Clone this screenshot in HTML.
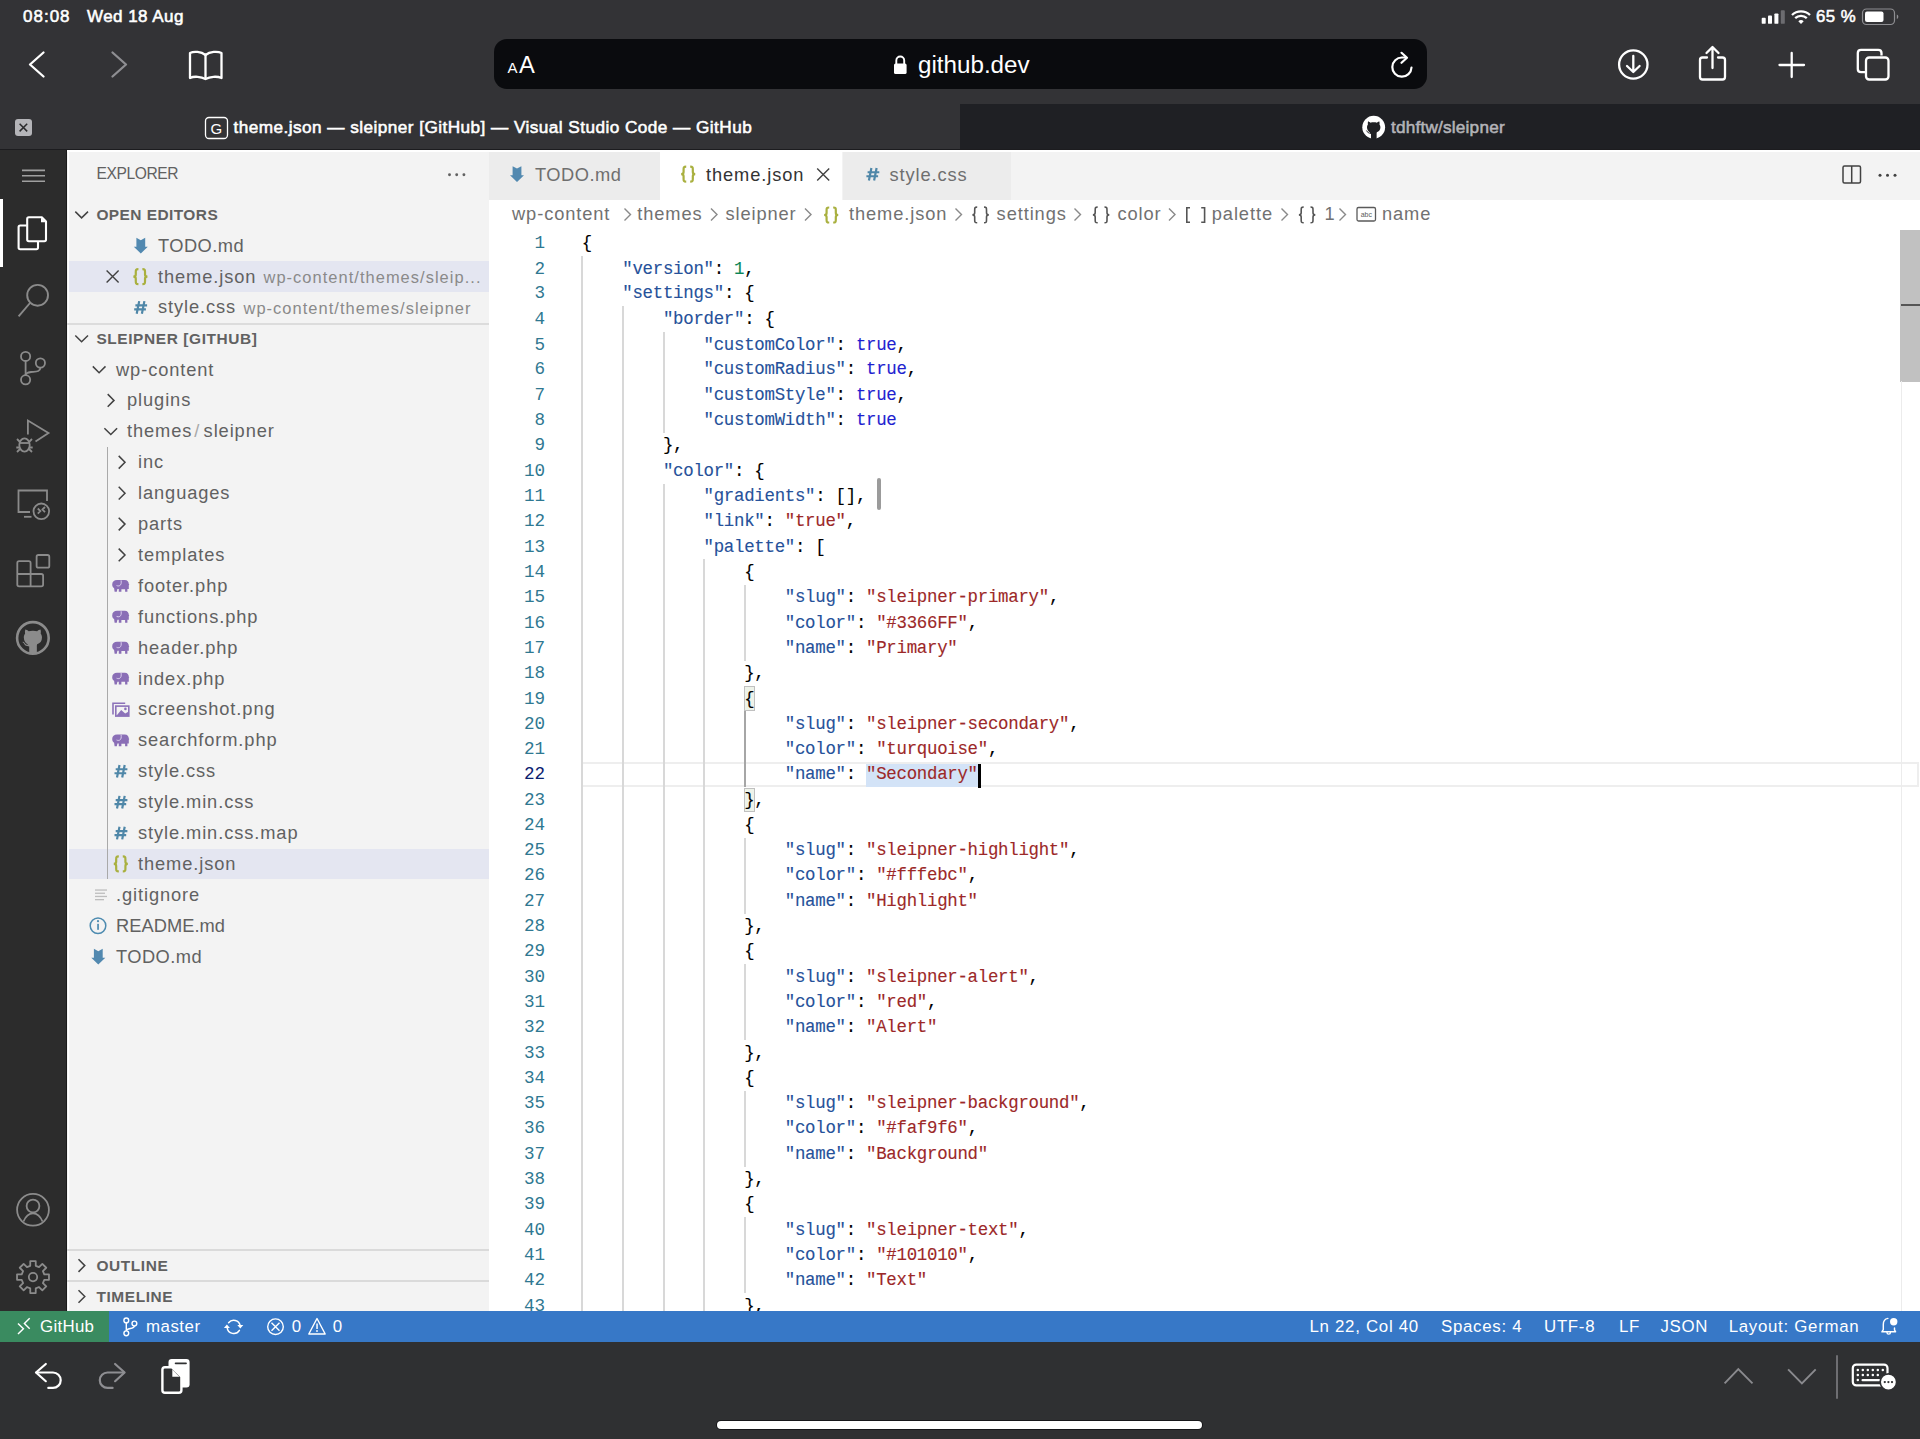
<!DOCTYPE html>
<html><head><meta charset="utf-8">
<style>
html,body{margin:0;padding:0}
body{width:1920px;height:1439px;overflow:hidden;position:relative;background:#333336;font-family:"Liberation Sans",sans-serif}
.a{position:absolute}
.t{position:absolute;white-space:pre;line-height:1}
svg.ov{position:absolute;left:0;top:0;overflow:visible}
.ios{color:#fff;font-size:17px;font-weight:normal;-webkit-text-stroke:0.55px currentColor;letter-spacing:0.45px}
.side{color:#616161;font-size:18.27px;letter-spacing:0.9px}
.desc{color:#8a8a8a;font-size:16.45px;letter-spacing:1.04px}
.hdr{color:#616161;font-size:15.45px;font-weight:bold;letter-spacing:0.6px}
.tab{font-size:18.27px;letter-spacing:0.9px}
.bc{color:#717171;font-size:18.27px;letter-spacing:0.9px}
.st{color:#fff;font-size:16.86px;letter-spacing:0.7px}
.code{font-family:"Liberation Mono",monospace;font-size:17.4px;letter-spacing:-0.28px;line-height:23.645px;white-space:pre;position:absolute;left:581.7px;top:230.5px;color:#000;-webkit-text-stroke:0.12px currentColor;transform:scaleY(1.07);transform-origin:0 0}
.ln{font-family:"Liberation Mono",monospace;font-size:17.6px;line-height:23.645px;transform:scaleY(1.07);transform-origin:0 0;white-space:pre;position:absolute;text-align:right;color:#2f7891}
.k{color:#26519a}.s{color:#9c2828}.n{color:#098658}.b{color:#1f1fd0}

</style></head><body>
<div class="a" style="left:0.00px;top:0.00px;width:1920.00px;height:104.00px;background:#333336;"></div>
<div class="t ios" style="left:23.00px;top:8.00px;letter-spacing:1px">08:08</div>
<div class="t ios" style="left:87.00px;top:8.00px;">Wed 18 Aug</div>
<div class="t ios" style="left:1816.00px;top:9.00px;font-weight:normal;font-size:16.8px;letter-spacing:0.5px">65 %</div>
<div class="a" style="left:493.50px;top:39.30px;width:933.00px;height:50.20px;background:#0a0b0e;border-radius:13px"></div>
<div class="t " style="left:507.50px;top:54.20px;color:#fff;font-size:23.7px"><span style="font-size:15px;letter-spacing:1.5px">A</span>A</div>
<div class="t " style="left:918.00px;top:52.70px;color:#fff;font-size:24.2px">github.dev</div>
<div class="a" style="left:960.00px;top:104.00px;width:960.00px;height:45.00px;background:#1f2024;"></div>
<div class="a" style="left:0.00px;top:148.60px;width:1920.00px;height:1.60px;background:#1c1c1f;"></div>
<div class="t ios" style="left:233.50px;top:119.30px;font-size:17.2px">theme.json — sleipner [GitHub] — Visual Studio Code — GitHub</div>
<div class="t ios" style="left:1391.00px;top:119.30px;color:#b4b4b8;font-size:17.2px;letter-spacing:0.2px">tdhftw/sleipner</div>
<div class="a" style="left:0.00px;top:150.00px;width:67.40px;height:1161.20px;background:#2c2c2c;"></div>
<div class="a" style="left:67.40px;top:150.00px;width:421.60px;height:1161.20px;background:#f3f3f3;"></div>
<div class="a" style="left:66.00px;top:150.00px;width:1.40px;height:1161.20px;background:#1a1a1a;"></div>
<div class="a" style="left:67.70px;top:150.00px;width:1.30px;height:1161.20px;background:#ffffff;"></div>
<div class="a" style="left:67.40px;top:150.00px;width:421.60px;height:1.70px;background:#ffffff;"></div>
<div class="a" style="left:489.00px;top:150.00px;width:1431.00px;height:1161.20px;background:#ffffff;"></div>
<div class="a" style="left:0.00px;top:1311.20px;width:1920.00px;height:30.90px;background:#3778c7;"></div>
<div class="a" style="left:0.00px;top:1311.20px;width:109.40px;height:30.90px;background:#3a8b60;"></div>
<div class="a" style="left:0.00px;top:1342.10px;width:1920.00px;height:97.00px;background:#2f3032;"></div>
<div class="t hdr" style="left:96.60px;top:166.30px;font-weight:normal;letter-spacing:-0.42px;font-size:15.6px">EXPLORER</div>
<div class="t hdr" style="left:96.40px;top:206.70px;letter-spacing:0.45px">OPEN EDITORS</div>
<div class="t side" style="left:158px;top:236.6px;letter-spacing:0.45px">TODO.md</div>
<div class="a" style="left:69.00px;top:261.10px;width:420.00px;height:30.90px;background:#e4e6f1;"></div>
<div class="t side" style="left:158px;top:267.5px;">theme.json</div>
<div class="t desc" style="left:263.5px;top:268.8px">wp-content/themes/sleip...</div>
<div class="t side" style="left:158px;top:298.4px;">style.css</div>
<div class="t desc" style="left:243.5px;top:299.7px">wp-content/themes/sleipner</div>
<div class="a" style="left:67.40px;top:322.80px;width:421.60px;height:2.00px;background:#dcdcdc;"></div>
<div class="t hdr" style="left:96.40px;top:331.20px;">SLEIPNER [GITHUB]</div>
<div class="t side" style="left:116.0px;top:360.5px;">wp-content</div>
<div class="t side" style="left:127.0px;top:391.4px;">plugins</div>
<div class="t side" style="left:127.0px;top:422.3px;">themes</div>
<div class="t side" style="left:194.2px;top:422.3px;color:#a8a8a8;letter-spacing:0">/</div>
<div class="t side" style="left:203.6px;top:422.3px">sleipner</div>
<div class="t side" style="left:138.0px;top:453.2px;">inc</div>
<div class="t side" style="left:138.0px;top:484.1px;">languages</div>
<div class="t side" style="left:138.0px;top:515.0px;">parts</div>
<div class="t side" style="left:138.0px;top:545.9px;">templates</div>
<div class="t side" style="left:138.0px;top:576.8px;">footer.php</div>
<div class="t side" style="left:138.0px;top:607.7px;">functions.php</div>
<div class="t side" style="left:138.0px;top:638.6px;">header.php</div>
<div class="t side" style="left:138.0px;top:669.5px;">index.php</div>
<div class="t side" style="left:138.0px;top:700.4px;">screenshot.png</div>
<div class="t side" style="left:138.0px;top:731.3px;">searchform.php</div>
<div class="t side" style="left:138.0px;top:762.2px;">style.css</div>
<div class="t side" style="left:138.0px;top:793.1px;">style.min.css</div>
<div class="t side" style="left:138.0px;top:824.0px;">style.min.css.map</div>
<div class="a" style="left:69.00px;top:848.50px;width:420.00px;height:30.90px;background:#e4e6f1;"></div>
<div class="t side" style="left:138.0px;top:854.9px;">theme.json</div>
<div class="t side" style="left:116.0px;top:885.8px;">.gitignore</div>
<div class="t side" style="left:116.0px;top:916.7px;letter-spacing:0.05px">README.md</div>
<div class="t side" style="left:116.0px;top:947.6px;letter-spacing:0.45px">TODO.md</div>
<div class="a" style="left:106.60px;top:446.80px;width:1.30px;height:432.60px;background:#a9a9a9;"></div>
<div class="a" style="left:67.40px;top:1249.20px;width:421.60px;height:1.50px;background:#dadada;"></div>
<div class="a" style="left:67.40px;top:1280.10px;width:421.60px;height:1.50px;background:#dadada;"></div>
<div class="t hdr" style="left:96.40px;top:1257.70px;">OUTLINE</div>
<div class="t hdr" style="left:96.40px;top:1288.50px;">TIMELINE</div>
<div class="a" style="left:489.00px;top:150.00px;width:1431.00px;height:49.60px;background:#f3f3f3;"></div>
<div class="a" style="left:489.00px;top:150.00px;width:1431.00px;height:2.00px;background:#ffffff;"></div>
<div class="a" style="left:489.00px;top:152.00px;width:171.20px;height:47.60px;background:#ececec;"></div>
<div class="a" style="left:660.20px;top:152.00px;width:182.30px;height:47.60px;background:#ffffff;"></div>
<div class="a" style="left:842.50px;top:152.00px;width:168.50px;height:47.60px;background:#ececec;"></div>
<div class="t tab" style="left:535.00px;top:165.50px;color:#6f6f6f;letter-spacing:0.5px">TODO.md</div>
<div class="t tab" style="left:706.00px;top:165.50px;color:#333">theme.json</div>
<div class="t tab" style="left:889.40px;top:165.50px;color:#6f6f6f">style.css</div>
<div class="t bc" style="left:512.00px;top:205.00px;">wp-content</div>
<div class="t bc" style="left:637.20px;top:205.00px;">themes</div>
<div class="t bc" style="left:725.40px;top:205.00px;">sleipner</div>
<div class="t bc" style="left:849.00px;top:205.00px;">theme.json</div>
<div class="t bc" style="left:996.60px;top:205.00px;">settings</div>
<div class="t bc" style="left:1117.40px;top:205.00px;">color</div>
<div class="t bc" style="left:1211.80px;top:205.00px;">palette</div>
<div class="t bc" style="left:1324.40px;top:205.00px;">1</div>
<div class="t bc" style="left:1382.00px;top:205.00px;">name</div>
<div class="a" style="left:582.50px;top:762.30px;width:1336.50px;height:24.30px;background:transparent;border:2px solid #eeeeee;border-left:0;box-sizing:border-box"></div>
<div class="a" style="left:866.38px;top:763.60px;width:111.76px;height:23.70px;background:#d3e3f7;"></div>
<div class="a" style="left:744.46px;top:686.40px;width:10.56px;height:24.30px;background:#eef3ea;border:1.4px solid #c0c0c0;box-sizing:border-box"></div>
<div class="a" style="left:744.46px;top:787.60px;width:10.56px;height:24.30px;background:#eef3ea;border:1.4px solid #c0c0c0;box-sizing:border-box"></div>
<div class="a" style="left:581.40px;top:255.80px;width:2.00px;height:1062.60px;background:#d8d8d8;"></div>
<div class="a" style="left:622.04px;top:306.40px;width:2.00px;height:1012.00px;background:#d8d8d8;"></div>
<div class="a" style="left:662.68px;top:331.70px;width:2.00px;height:101.20px;background:#d8d8d8;"></div>
<div class="a" style="left:662.68px;top:483.50px;width:2.00px;height:834.90px;background:#d8d8d8;"></div>
<div class="a" style="left:703.32px;top:559.40px;width:2.00px;height:759.00px;background:#d8d8d8;"></div>
<div class="a" style="left:743.96px;top:584.70px;width:2.00px;height:75.90px;background:#d8d8d8;"></div>
<div class="a" style="left:743.96px;top:837.70px;width:2.00px;height:75.90px;background:#d8d8d8;"></div>
<div class="a" style="left:743.96px;top:964.20px;width:2.00px;height:75.90px;background:#d8d8d8;"></div>
<div class="a" style="left:743.96px;top:1090.70px;width:2.00px;height:75.90px;background:#d8d8d8;"></div>
<div class="a" style="left:743.96px;top:1217.20px;width:2.00px;height:75.90px;background:#d8d8d8;"></div>
<div class="a" style="left:743.96px;top:711.20px;width:2.00px;height:75.90px;background:#a6a6a6;"></div>
<div class="ln" style="left:489px;width:56px;top:231.4px">1
2
3
4
5
6
7
8
9
10
11
12
13
14
15
16
17
18
19
20
21
<span style="color:#0b216f">22</span>
23
24
25
26
27
28
29
30
31
32
33
34
35
36
37
38
39
40
41
42
43</div>
<div class="code" style="top:231.4px">{
    <span class="k">&quot;version&quot;</span>: <span class="n">1</span>,
    <span class="k">&quot;settings&quot;</span>: {
        <span class="k">&quot;border&quot;</span>: {
            <span class="k">&quot;customColor&quot;</span>: <span class="b">true</span>,
            <span class="k">&quot;customRadius&quot;</span>: <span class="b">true</span>,
            <span class="k">&quot;customStyle&quot;</span>: <span class="b">true</span>,
            <span class="k">&quot;customWidth&quot;</span>: <span class="b">true</span>
        },
        <span class="k">&quot;color&quot;</span>: {
            <span class="k">&quot;gradients&quot;</span>: [],
            <span class="k">&quot;link&quot;</span>: <span class="s">&quot;true&quot;</span>,
            <span class="k">&quot;palette&quot;</span>: [
                {
                    <span class="k">&quot;slug&quot;</span>: <span class="s">&quot;sleipner-primary&quot;</span>,
                    <span class="k">&quot;color&quot;</span>: <span class="s">&quot;#3366FF&quot;</span>,
                    <span class="k">&quot;name&quot;</span>: <span class="s">&quot;Primary&quot;</span>
                },
                {
                    <span class="k">&quot;slug&quot;</span>: <span class="s">&quot;sleipner-secondary&quot;</span>,
                    <span class="k">&quot;color&quot;</span>: <span class="s">&quot;turquoise&quot;</span>,
                    <span class="k">&quot;name&quot;</span>: <span class="s">&quot;Secondary&quot;</span>
                },
                {
                    <span class="k">&quot;slug&quot;</span>: <span class="s">&quot;sleipner-highlight&quot;</span>,
                    <span class="k">&quot;color&quot;</span>: <span class="s">&quot;#fffebc&quot;</span>,
                    <span class="k">&quot;name&quot;</span>: <span class="s">&quot;Highlight&quot;</span>
                },
                {
                    <span class="k">&quot;slug&quot;</span>: <span class="s">&quot;sleipner-alert&quot;</span>,
                    <span class="k">&quot;color&quot;</span>: <span class="s">&quot;red&quot;</span>,
                    <span class="k">&quot;name&quot;</span>: <span class="s">&quot;Alert&quot;</span>
                },
                {
                    <span class="k">&quot;slug&quot;</span>: <span class="s">&quot;sleipner-background&quot;</span>,
                    <span class="k">&quot;color&quot;</span>: <span class="s">&quot;#faf9f6&quot;</span>,
                    <span class="k">&quot;name&quot;</span>: <span class="s">&quot;Background&quot;</span>
                },
                {
                    <span class="k">&quot;slug&quot;</span>: <span class="s">&quot;sleipner-text&quot;</span>,
                    <span class="k">&quot;color&quot;</span>: <span class="s">&quot;#101010&quot;</span>,
                    <span class="k">&quot;name&quot;</span>: <span class="s">&quot;Text&quot;</span>
                },</div>
<div class="a" style="left:978.34px;top:763.60px;width:2.80px;height:24.50px;background:#000;"></div>
<div class="a" style="left:876.50px;top:478.00px;width:4.50px;height:32.00px;background:#9b9b9b;border-radius:2.2px"></div>
<div class="a" style="left:1900.00px;top:230.40px;width:20.00px;height:151.60px;background:#c1c1c1;"></div>
<div class="a" style="left:1900.50px;top:381.00px;width:1.00px;height:930.00px;background:#ececec;"></div>
<div class="a" style="left:1901.00px;top:304.00px;width:19.00px;height:2.20px;background:#555555;"></div>
<div class="a" style="left:0.00px;top:1311.20px;width:1920.00px;height:30.90px;background:#3778c7;"></div>
<div class="a" style="left:0.00px;top:1311.20px;width:109.40px;height:30.90px;background:#3a8b60;"></div>
<div class="a" style="left:0.00px;top:1342.10px;width:1920.00px;height:97.00px;background:#2f3032;"></div>
<div class="t st" style="left:40.00px;top:1318.50px;letter-spacing:0.3px">GitHub</div>
<div class="t st" style="left:146.00px;top:1318.50px;letter-spacing:0.5px">master</div>
<div class="t st" style="left:291.70px;top:1318.50px;">0</div>
<div class="t st" style="left:332.80px;top:1318.50px;">0</div>
<div class="t st" style="left:1309.50px;top:1318.50px;">Ln 22, Col 40</div>
<div class="t st" style="left:1441.00px;top:1318.50px;">Spaces: 4</div>
<div class="t st" style="left:1544.00px;top:1318.50px;">UTF-8</div>
<div class="t st" style="left:1619.00px;top:1318.50px;">LF</div>
<div class="t st" style="left:1660.40px;top:1318.50px;">JSON</div>
<div class="t st" style="left:1728.70px;top:1318.50px;">Layout: German</div>
<div class="a" style="left:1835.80px;top:1355.20px;width:2.40px;height:43.80px;background:#6e6e72;border-radius:1.2px"></div>
<div class="a" style="left:717.00px;top:1420.60px;width:485.00px;height:8.20px;background:#ffffff;border-radius:4.1px;box-shadow:0 0 0 1px #17171a"></div>
<div class="a" style="left:0.00px;top:198.60px;width:3.00px;height:68.20px;background:#ffffff;"></div>
<div class="t" style="left:210.5px;top:120.5px;color:#fff;font-size:15px">G</div>
<div class="a" style="left:15.00px;top:119.20px;width:16.80px;height:16.80px;background:#b4b4b8;border-radius:3px"></div>
<svg class="ov" width="1920" height="1439" viewBox="0 0 1920 1439">
<circle cx="449.5" cy="174.8" r="1.45" fill="#616161"/>
<circle cx="456.7" cy="174.8" r="1.45" fill="#616161"/>
<circle cx="463.9" cy="174.8" r="1.45" fill="#616161"/>
<path d="M75.3 211.6 L81.6 217.9 L88.0 211.6" fill="none" stroke="#424242" stroke-width="1.5"/>
<path transform="translate(133.80 237.75)" d="M2.6 0 L7 2.4 L11.4 0 V9 H14 L7 15.7 L0 9 H2.6 Z" fill="#5289b0"/>
<path d="M106.6 270.6 l12 12 M118.6 270.6 l-12 12" stroke="#424242" stroke-width="1.4"/>
<path d="M138.42 269.05 C135.78 269.05 135.78 269.95 135.78 272.05 L135.78 274.45 C135.78 275.80 135.12 276.55 133.36 276.55 C135.12 276.55 135.78 277.30 135.78 278.65 L135.78 281.05 C135.78 283.15 135.78 284.05 138.42 284.05" fill="none" stroke="#a9b03f" stroke-width="2.20"/>
<path d="M142.38 269.05 C145.02 269.05 145.02 269.95 145.02 272.05 L145.02 274.45 C145.02 275.80 145.68 276.55 147.44 276.55 C145.68 276.55 145.02 277.30 145.02 278.65 L145.02 281.05 C145.02 283.15 145.02 284.05 142.38 284.05" fill="none" stroke="#a9b03f" stroke-width="2.20"/>
<path transform="translate(133.80 301.15)" d="M5.4 0 L2.9 12.6 M10.6 0 L8.1 12.6 M1.6 4.3 H13.3 M0.4 8.3 H12.1" fill="none" stroke="#4f87a8" stroke-width="2.2"/>
<path d="M75.3 335.5 L81.6 341.8 L88.0 335.5" fill="none" stroke="#424242" stroke-width="1.5"/>
<path d="M92.8 366.4 L99.1 372.7 L105.5 366.4" fill="none" stroke="#424242" stroke-width="1.5"/>
<path d="M107.7 394.1 L114.0 400.4 L107.7 406.8" fill="none" stroke="#424242" stroke-width="1.5"/>
<path d="M104.4 428.2 L110.8 434.5 L117.1 428.2" fill="none" stroke="#424242" stroke-width="1.5"/>
<path d="M118.7 455.9 L125.0 462.2 L118.7 468.6" fill="none" stroke="#424242" stroke-width="1.5"/>
<path d="M118.7 486.8 L125.0 493.2 L118.7 499.5" fill="none" stroke="#424242" stroke-width="1.5"/>
<path d="M118.7 517.7 L125.0 524.1 L118.7 530.4" fill="none" stroke="#424242" stroke-width="1.5"/>
<path d="M118.7 548.6 L125.0 555.0 L118.7 561.3" fill="none" stroke="#424242" stroke-width="1.5"/>
<g transform="translate(112.20 579.95)"><path fill="#8a6eb6" d="M0 4.6 C0 1.6 2 0 4.8 0 L12.6 0 C15.2 0 16.6 1.8 16.6 4 L17.1 4.6 L16.6 5.2 V9 L15.2 9 V11.9 H12.9 V9.2 H9.2 V11.9 H6.6 V9 H5.2 L4.6 11.9 H2.4 L1.9 8.2 C0.7 7.6 0 6.2 0 4.6 Z"/><path d="M8.9 0.4 C9.2 3 9 4.8 7.6 5.6 C6.6 6.1 5.5 6.1 4.4 5.6" fill="none" stroke="#dcd0ee" stroke-width="1"/></g>
<g transform="translate(112.20 610.85)"><path fill="#8a6eb6" d="M0 4.6 C0 1.6 2 0 4.8 0 L12.6 0 C15.2 0 16.6 1.8 16.6 4 L17.1 4.6 L16.6 5.2 V9 L15.2 9 V11.9 H12.9 V9.2 H9.2 V11.9 H6.6 V9 H5.2 L4.6 11.9 H2.4 L1.9 8.2 C0.7 7.6 0 6.2 0 4.6 Z"/><path d="M8.9 0.4 C9.2 3 9 4.8 7.6 5.6 C6.6 6.1 5.5 6.1 4.4 5.6" fill="none" stroke="#dcd0ee" stroke-width="1"/></g>
<g transform="translate(112.20 641.75)"><path fill="#8a6eb6" d="M0 4.6 C0 1.6 2 0 4.8 0 L12.6 0 C15.2 0 16.6 1.8 16.6 4 L17.1 4.6 L16.6 5.2 V9 L15.2 9 V11.9 H12.9 V9.2 H9.2 V11.9 H6.6 V9 H5.2 L4.6 11.9 H2.4 L1.9 8.2 C0.7 7.6 0 6.2 0 4.6 Z"/><path d="M8.9 0.4 C9.2 3 9 4.8 7.6 5.6 C6.6 6.1 5.5 6.1 4.4 5.6" fill="none" stroke="#dcd0ee" stroke-width="1"/></g>
<g transform="translate(112.20 672.65)"><path fill="#8a6eb6" d="M0 4.6 C0 1.6 2 0 4.8 0 L12.6 0 C15.2 0 16.6 1.8 16.6 4 L17.1 4.6 L16.6 5.2 V9 L15.2 9 V11.9 H12.9 V9.2 H9.2 V11.9 H6.6 V9 H5.2 L4.6 11.9 H2.4 L1.9 8.2 C0.7 7.6 0 6.2 0 4.6 Z"/><path d="M8.9 0.4 C9.2 3 9 4.8 7.6 5.6 C6.6 6.1 5.5 6.1 4.4 5.6" fill="none" stroke="#dcd0ee" stroke-width="1"/></g>
<g transform="translate(112.2 702.5)"><path d="M0.8 12 V0.8 H13" fill="none" stroke="#8c72b9" stroke-width="1.6"/><rect x="3.6" y="3.6" width="13" height="10" fill="none" stroke="#8c72b9" stroke-width="1.6"/><path d="M4 13.5 L9 7.5 L13 11 L16.5 9 V13.5 Z" fill="#8c72b9"/><circle cx="13.2" cy="6.4" r="1.3" fill="#8c72b9"/></g>
<g transform="translate(112.20 734.45)"><path fill="#8a6eb6" d="M0 4.6 C0 1.6 2 0 4.8 0 L12.6 0 C15.2 0 16.6 1.8 16.6 4 L17.1 4.6 L16.6 5.2 V9 L15.2 9 V11.9 H12.9 V9.2 H9.2 V11.9 H6.6 V9 H5.2 L4.6 11.9 H2.4 L1.9 8.2 C0.7 7.6 0 6.2 0 4.6 Z"/><path d="M8.9 0.4 C9.2 3 9 4.8 7.6 5.6 C6.6 6.1 5.5 6.1 4.4 5.6" fill="none" stroke="#dcd0ee" stroke-width="1"/></g>
<path transform="translate(114.10 764.95)" d="M5.4 0 L2.9 12.6 M10.6 0 L8.1 12.6 M1.6 4.3 H13.3 M0.4 8.3 H12.1" fill="none" stroke="#4f87a8" stroke-width="2.2"/>
<path transform="translate(114.10 795.85)" d="M5.4 0 L2.9 12.6 M10.6 0 L8.1 12.6 M1.6 4.3 H13.3 M0.4 8.3 H12.1" fill="none" stroke="#4f87a8" stroke-width="2.2"/>
<path transform="translate(114.10 826.75)" d="M5.4 0 L2.9 12.6 M10.6 0 L8.1 12.6 M1.6 4.3 H13.3 M0.4 8.3 H12.1" fill="none" stroke="#4f87a8" stroke-width="2.2"/>
<path d="M118.82 856.45 C116.18 856.45 116.18 857.35 116.18 859.45 L116.18 861.85 C116.18 863.20 115.52 863.95 113.76 863.95 C115.52 863.95 116.18 864.70 116.18 866.05 L116.18 868.45 C116.18 870.55 116.18 871.45 118.82 871.45" fill="none" stroke="#a9b03f" stroke-width="2.20"/>
<path d="M122.78 856.45 C125.42 856.45 125.42 857.35 125.42 859.45 L125.42 861.85 C125.42 863.20 126.08 863.95 127.84 863.95 C126.08 863.95 125.42 864.70 125.42 866.05 L125.42 868.45 C125.42 870.55 125.42 871.45 122.78 871.45" fill="none" stroke="#a9b03f" stroke-width="2.20"/>
<rect x="95" y="889.4" width="12" height="1.3" fill="#bdbdbd"/>
<rect x="95" y="892.6" width="10" height="1.3" fill="#bdbdbd"/>
<rect x="95" y="895.8" width="12" height="1.3" fill="#bdbdbd"/>
<rect x="95" y="899.0" width="9" height="1.3" fill="#bdbdbd"/>
<circle cx="98" cy="925.8" r="7.8" fill="none" stroke="#4d8bb0" stroke-width="1.5"/>
<rect x="97.2" y="923.8" width="1.7" height="6" fill="#4d8bb0"/><circle cx="98" cy="921.2" r="1.1" fill="#4d8bb0"/>
<path transform="translate(91.30 948.75)" d="M2.6 0 L7 2.4 L11.4 0 V9 H14 L7 15.7 L0 9 H2.6 Z" fill="#5289b0"/>
<path d="M78.5 1259.2 L84.8 1265.6 L78.5 1271.9" fill="none" stroke="#424242" stroke-width="1.5"/>
<path d="M78.5 1290.2 L84.8 1296.5 L78.5 1302.8" fill="none" stroke="#424242" stroke-width="1.5"/>
<path transform="translate(510.00 166.20)" d="M2.6 0 L7 2.4 L11.4 0 V9 H14 L7 15.7 L0 9 H2.6 Z" fill="#5289b0"/>
<path d="M686.22 166.70 C683.58 166.70 683.58 167.60 683.58 169.70 L683.58 172.10 C683.58 173.45 682.92 174.20 681.16 174.20 C682.92 174.20 683.58 174.95 683.58 176.30 L683.58 178.70 C683.58 180.80 683.58 181.70 686.22 181.70" fill="none" stroke="#a9b03f" stroke-width="2.20"/>
<path d="M690.18 166.70 C692.82 166.70 692.82 167.60 692.82 169.70 L692.82 172.10 C692.82 173.45 693.48 174.20 695.24 174.20 C693.48 174.20 692.82 174.95 692.82 176.30 L692.82 178.70 C692.82 180.80 692.82 181.70 690.18 181.70" fill="none" stroke="#a9b03f" stroke-width="2.20"/>
<path d="M817.2 168.6 l12 12 M829.2 168.6 l-12 12" stroke="#424242" stroke-width="1.4"/>
<path transform="translate(866.00 167.95)" d="M5.4 0 L2.9 12.6 M10.6 0 L8.1 12.6 M1.6 4.3 H13.3 M0.4 8.3 H12.1" fill="none" stroke="#4f87a8" stroke-width="2.2"/>
<rect x="1843" y="166" width="17.5" height="17" rx="1.5" fill="none" stroke="#424242" stroke-width="1.5"/><path d="M1851.7 166 v17" stroke="#424242" stroke-width="1.5"/>
<circle cx="1880.0" cy="175.2" r="1.5" fill="#424242"/>
<circle cx="1887.5" cy="175.2" r="1.5" fill="#424242"/>
<circle cx="1895.0" cy="175.2" r="1.5" fill="#424242"/>
<path d="M624.5 208.4 L630.5 214.5 L624.5 220.6" fill="none" stroke="#8a8a8a" stroke-width="1.4"/>
<path d="M711.0 208.4 L717.0 214.5 L711.0 220.6" fill="none" stroke="#8a8a8a" stroke-width="1.4"/>
<path d="M805.0 208.4 L811.0 214.5 L805.0 220.6" fill="none" stroke="#8a8a8a" stroke-width="1.4"/>
<path d="M955.5 208.4 L961.5 214.5 L955.5 220.6" fill="none" stroke="#8a8a8a" stroke-width="1.4"/>
<path d="M1074.5 208.4 L1080.5 214.5 L1074.5 220.6" fill="none" stroke="#8a8a8a" stroke-width="1.4"/>
<path d="M1169.0 208.4 L1175.0 214.5 L1169.0 220.6" fill="none" stroke="#8a8a8a" stroke-width="1.4"/>
<path d="M1281.5 208.4 L1287.5 214.5 L1281.5 220.6" fill="none" stroke="#8a8a8a" stroke-width="1.4"/>
<path d="M1339.5 208.4 L1345.5 214.5 L1339.5 220.6" fill="none" stroke="#8a8a8a" stroke-width="1.4"/>
<path d="M829.22 207.50 C826.58 207.50 826.58 208.40 826.58 210.50 L826.58 212.90 C826.58 214.25 825.92 215.00 824.16 215.00 C825.92 215.00 826.58 215.75 826.58 217.10 L826.58 219.50 C826.58 221.60 826.58 222.50 829.22 222.50" fill="none" stroke="#a9b03f" stroke-width="2.20"/>
<path d="M833.18 207.50 C835.82 207.50 835.82 208.40 835.82 210.50 L835.82 212.90 C835.82 214.25 836.48 215.00 838.24 215.00 C836.48 215.00 835.82 215.75 835.82 217.10 L835.82 219.50 C835.82 221.60 835.82 222.50 833.18 222.50" fill="none" stroke="#a9b03f" stroke-width="2.20"/>
<path d="M977.21 207.00 C974.69 207.00 974.69 207.95 974.69 210.16 L974.69 212.69 C974.69 214.11 974.06 214.90 972.38 214.90 C974.06 214.90 974.69 215.69 974.69 217.11 L974.69 219.64 C974.69 221.85 974.69 222.80 977.21 222.80" fill="none" stroke="#555555" stroke-width="1.60"/>
<path d="M983.99 207.00 C986.51 207.00 986.51 207.95 986.51 210.16 L986.51 212.69 C986.51 214.11 987.14 214.90 988.82 214.90 C987.14 214.90 986.51 215.69 986.51 217.11 L986.51 219.64 C986.51 221.85 986.51 222.80 983.99 222.80" fill="none" stroke="#555555" stroke-width="1.60"/>
<path d="M1097.71 207.00 C1095.19 207.00 1095.19 207.95 1095.19 210.16 L1095.19 212.69 C1095.19 214.11 1094.56 214.90 1092.88 214.90 C1094.56 214.90 1095.19 215.69 1095.19 217.11 L1095.19 219.64 C1095.19 221.85 1095.19 222.80 1097.71 222.80" fill="none" stroke="#555555" stroke-width="1.60"/>
<path d="M1104.49 207.00 C1107.01 207.00 1107.01 207.95 1107.01 210.16 L1107.01 212.69 C1107.01 214.11 1107.64 214.90 1109.32 214.90 C1107.64 214.90 1107.01 215.69 1107.01 217.11 L1107.01 219.64 C1107.01 221.85 1107.01 222.80 1104.49 222.80" fill="none" stroke="#555555" stroke-width="1.60"/>
<path d="M1303.71 207.00 C1301.19 207.00 1301.19 207.95 1301.19 210.16 L1301.19 212.69 C1301.19 214.11 1300.56 214.90 1298.88 214.90 C1300.56 214.90 1301.19 215.69 1301.19 217.11 L1301.19 219.64 C1301.19 221.85 1301.19 222.80 1303.71 222.80" fill="none" stroke="#555555" stroke-width="1.60"/>
<path d="M1310.49 207.00 C1313.01 207.00 1313.01 207.95 1313.01 210.16 L1313.01 212.69 C1313.01 214.11 1313.64 214.90 1315.32 214.90 C1313.64 214.90 1313.01 215.69 1313.01 217.11 L1313.01 219.64 C1313.01 221.85 1313.01 222.80 1310.49 222.80" fill="none" stroke="#555555" stroke-width="1.60"/>
<path d="M1190 207.7 H1186.8 V222.3 H1190 M1201.2 207.7 H1204.6 V222.3 H1201.2" fill="none" stroke="#555" stroke-width="1.6"/>
<rect x="1357" y="207.5" width="18.5" height="13.5" rx="1.5" fill="none" stroke="#5a5a5a" stroke-width="1.3"/>
<text x="1366.3" y="217" font-size="7" font-family="Liberation Sans" text-anchor="middle" fill="#5a5a5a">abc</text>
<path d="M18 1323.4 L23.4 1328.7 L18 1334 M29.7 1318.2 L24.4 1323.5 L29.7 1328.8" fill="none" stroke="#fff" stroke-width="1.45"/>
<g fill="none" stroke="#fff" stroke-width="1.4"><circle cx="126.3" cy="1320.4" r="2.4"/><circle cx="126.3" cy="1333.3" r="2.4"/><circle cx="134.4" cy="1323.5" r="2.4"/><path d="M126.3 1322.8 V1330.9 M134.4 1325.9 C134.4 1329.5 126.3 1327.5 126.3 1330.9"/></g>
<g fill="none" stroke="#fff" stroke-width="1.5" stroke-linecap="round"><path d="M228.6 1322.7 A6.6 6.6 0 0 1 240.2 1325.6"/><path d="M239.4 1330.4 A6.6 6.6 0 0 1 227.2 1327.6"/></g><path d="M237.3 1325.1 L243.3 1325.1 L240.3 1328.6 Z M223.9 1328 L229.9 1328 L226.9 1324.6 Z" fill="#fff"/>
<g fill="none" stroke="#fff" stroke-width="1.4"><circle cx="275.5" cy="1326.7" r="7.8"/><path d="M271.5 1322.7 l8 8 M279.5 1322.7 l-8 8"/></g>
<g fill="none" stroke="#fff" stroke-width="1.4"><path d="M317 1318.5 L325.2 1334 H308.8 Z" stroke-linejoin="round"/></g><rect x="316.3" y="1323.5" width="1.5" height="5.5" fill="#fff"/><circle cx="317" cy="1331" r="0.9" fill="#fff"/>
<g fill="none" stroke="#fff" stroke-width="1.45" stroke-linecap="round" stroke-linejoin="round"><path d="M1887.9 1318.4 C1884.6 1318.9 1883.3 1321.5 1883.3 1324.6 V1329.6 L1881.9 1331.8 H1895.6 L1894.5 1329.8 V1328"/><path d="M1887 1332.4 a1.7 1.7 0 0 0 3.4 0"/></g><circle cx="1893.7" cy="1321.8" r="3.7" fill="#fff"/>
<g fill="none" stroke="#fff" stroke-width="2.2" stroke-linecap="round" stroke-linejoin="round"><path d="M45.8 1364 L36 1372.5 L45.8 1381.2"/><path d="M36.5 1372.5 H53 A7.7 7.7 0 0 1 53 1387.9 H48.3"/></g>
<g fill="none" stroke="#8e8e92" stroke-width="2.2" stroke-linecap="round" stroke-linejoin="round"><path d="M115.1 1364 L124.6 1372.5 L115.1 1381.2"/><path d="M124 1372.5 H107.5 A7.7 7.7 0 0 0 107.5 1387.9 H112.6"/></g>
<rect x="168.5" y="1358.9" width="21.1" height="28.6" rx="3.2" fill="#fff"/><path d="M175.6 1363.3 H186" stroke="#2f3032" stroke-width="1.8" stroke-linecap="round"/><path d="M165 1367.2 H171.8 L181.4 1376.6 V1390.2 q0 2.6 -2.6 2.6 H165 q-2.6 0 -2.6 -2.6 V1369.8 q0 -2.6 2.6 -2.6 Z" fill="#2f3032" stroke="#fff" stroke-width="2.4" stroke-linejoin="round"/><path d="M172.3 1369.6 V1376.8 H179.4 Z" fill="#fff"/>
<path d="M1724.6 1383.3 L1738.3 1369 L1752.5 1383.3" fill="none" stroke="#8a8a8e" stroke-width="1.9"/>
<path d="M1788.1 1369.3 L1801.9 1383.5 L1815.7 1369.3" fill="none" stroke="#8a8a8e" stroke-width="1.9"/>
<rect x="1852.8" y="1364.6" width="34.7" height="20.8" rx="3.5" fill="none" stroke="#fff" stroke-width="2.2"/>
<g fill="#fff"><circle cx="1857.8" cy="1370" r="1.25"/><circle cx="1862.8" cy="1370" r="1.25"/><circle cx="1867.8" cy="1370" r="1.25"/><circle cx="1872.8" cy="1370" r="1.25"/><circle cx="1877.8" cy="1370" r="1.25"/><circle cx="1882.8" cy="1370" r="1.25"/><circle cx="1857.8" cy="1375" r="1.25"/><circle cx="1862.8" cy="1375" r="1.25"/><circle cx="1867.8" cy="1375" r="1.25"/><circle cx="1872.8" cy="1375" r="1.25"/><circle cx="1877.8" cy="1375" r="1.25"/><circle cx="1857.8" cy="1380" r="1.25"/><rect x="1861.5" y="1379" width="19" height="2.2" rx="1"/></g>
<circle cx="1888.4" cy="1382.1" r="8.2" fill="#fff" stroke="#2f3032" stroke-width="1.6"/><g fill="#2f3032"><circle cx="1884.8" cy="1382.1" r="1.15"/><circle cx="1888.4" cy="1382.1" r="1.15"/><circle cx="1892" cy="1382.1" r="1.15"/></g>
<g stroke="#a0a0a0" stroke-width="1.6"><path d="M22 170.4 h23 M22 175.8 h23 M22 181.2 h23"/></g>
<g fill="none" stroke="#fff" stroke-width="2.1" stroke-linejoin="round"><path d="M26.8 225.5 H20.2 q-1.6 0 -1.6 1.6 V247.6 q0 1.6 1.6 1.6 H36.4 q1.6 0 1.6 -1.6 V241.3"/><path d="M28.8 217.3 H41.8 L46 221.5 V239.6 q0 1.6 -1.6 1.6 H28.8 q-1.6 0 -1.6 -1.6 V218.9 q0 -1.6 1.6 -1.6 Z"/></g><path d="M41 217.5 L46 222.3 H41 Z" fill="#fff"/>
<g fill="none" stroke="#8b8b8b" stroke-width="1.9"><circle cx="37.6" cy="295.3" r="10.4"/><path d="M30 303 L18.6 316.3"/></g>
<g fill="none" stroke="#8b8b8b" stroke-width="1.8"><circle cx="25.6" cy="356.4" r="4.6"/><circle cx="40.4" cy="363" r="4.6"/><circle cx="25.6" cy="379.8" r="4.6"/><path d="M25.6 361 V375.2"/><path d="M40.4 367.6 C40.4 372 36 371.5 31 372 C27.5 372.5 25.6 373 25.6 375"/></g>
<g fill="none" stroke="#8b8b8b" stroke-width="1.8"><path d="M27.9 434.5 V420.5 L48.5 433 L35.5 441.5"/><ellipse cx="24.5" cy="445" rx="5.2" ry="6.6"/><path d="M19.5 443 h10"/><path d="M16.3 447.5 h3 M29.7 447.5 h3 M17 439 l3 3 M32 439 l-3 3 M17 452 l3 -3 M32 452 l-3 -3"/></g>
<g fill="none" stroke="#8b8b8b" stroke-width="1.8"><path d="M30 512 H18.5 V490.5 H47 V501"/><path d="M24 516.8 H31.5"/><circle cx="41.3" cy="511.3" r="7.8"/><path d="M37.8 508.5 l2.6 2.6 l-2.6 2.6 M45 507 l-2.6 2.6 l2.6 2.6"/></g>
<g fill="none" stroke="#8b8b8b" stroke-width="1.8"><path d="M17.3 574 V563 q0 -1.8 1.8 -1.8 H28.8 q1.8 0 1.8 1.8 V574 H41.3 q1.8 0 1.8 1.8 V584.6 q0 1.8 -1.8 1.8 H19.1 q-1.8 0 -1.8 -1.8 Z"/><path d="M17.3 574 H30.6 V586.4"/><rect x="36.6" y="555" width="12.7" height="12.7" rx="1.8"/></g>
<circle cx="32.9" cy="637.9" r="15.8" fill="none" stroke="#8b8b8b" stroke-width="2.6"/>
<path transform="translate(32.9 0) scale(0.9 1) translate(-32.9 0)" fill="#8b8b8b" d="M28.8 652.6 V646.5 C25.5 646 24 645.5 23.3 644 C22.8 643 21.6 642 21 642 L22 641.8 C23.2 642 24 643.5 25 644.3 C25.8 645 26.8 644.7 27.6 644.4 C25 643.5 22.8 641 22.8 637.5 C22.8 636 23.3 634.7 24.2 633.7 C23.9 632.5 24 631 24.4 629.6 C25.6 629.6 27 630.4 28.2 631.3 C29.4 631 31 630.8 32.9 630.8 C34.8 630.8 36.4 631 37.6 631.3 C38.8 630.4 40.2 629.6 41.4 629.6 C41.8 631 41.9 632.5 41.6 633.7 C42.5 634.7 43 636 43 637.5 C43 641 40.8 643.5 37.6 644.2 C37.2 645 37.3 646 37.3 647 V652.6 C36.7 653.4 34.8 653.7 32.9 653.7 C31 653.7 29.2 653.4 28.8 652.6 Z"/>
<g fill="none" stroke="#8b8b8b" stroke-width="1.8"><circle cx="33" cy="1209.8" r="15.9"/><circle cx="33" cy="1206" r="6.4"/><path d="M23.5 1221.5 C25.5 1216.5 29 1213.3 33 1213.3 C37 1213.3 40.5 1216.5 42.5 1221.5"/></g>
<g fill="none" stroke="#8b8b8b" stroke-width="1.8" stroke-linejoin="round"><path d="M30.24 1265.83 L30.26 1261.13 L35.74 1261.13 L35.76 1265.83 L39.02 1267.18 L42.35 1263.87 L46.23 1267.75 L42.92 1271.08 L44.27 1274.34 L48.97 1274.36 L48.97 1279.84 L44.27 1279.86 L42.92 1283.12 L46.23 1286.45 L42.35 1290.33 L39.02 1287.02 L35.76 1288.37 L35.74 1293.07 L30.26 1293.07 L30.24 1288.37 L26.98 1287.02 L23.65 1290.33 L19.77 1286.45 L23.08 1283.12 L21.73 1279.86 L17.03 1279.84 L17.03 1274.36 L21.73 1274.34 L23.08 1271.08 L19.77 1267.75 L23.65 1263.87 L26.98 1267.18 Z"/><circle cx="33" cy="1277.1" r="4.2"/></g>
<path d="M43.5 52.5 L30 64.5 L43.5 76.5" fill="none" stroke="#fff" stroke-width="2.3" stroke-linecap="round" stroke-linejoin="round"/>
<path d="M112.5 52.5 L126 64.5 L112.5 76.5" fill="none" stroke="#8e8e92" stroke-width="2.3" stroke-linecap="round" stroke-linejoin="round"/>
<g fill="none" stroke="#fff" stroke-width="2.3" stroke-linejoin="round"><path d="M205.5 55 C201 51.5 194 51 190 53 V78 C194 76 201 76.5 205.5 79 C210 76.5 217 76 221.5 78 V53 C217.5 51 210 51.5 205.5 55 Z"/><path d="M205.5 55 V79"/></g>
<g><path d="M896.3 64 V60.5 a3.95 3.95 0 0 1 7.9 0 V64" fill="none" stroke="#fff" stroke-width="1.9"/><rect x="894" y="63.5" width="12.6" height="10.5" rx="1.6" fill="#fff"/></g>
<g fill="none" stroke="#fff" stroke-width="2.2" stroke-linecap="round" stroke-linejoin="round"><path d="M1411.5 67.5 A9.6 9.6 0 1 1 1402 57.5 H1405"/><path d="M1401.5 52.8 L1407 57.8 L1401.5 62.8"/></g>
<g fill="none" stroke="#fff" stroke-width="2.3" stroke-linecap="round" stroke-linejoin="round"><circle cx="1633.3" cy="64.5" r="14.2"/><path d="M1633.3 56 V72 M1627 66 L1633.3 72 L1639.6 66"/></g>
<g fill="none" stroke="#fff" stroke-width="2.3" stroke-linecap="round" stroke-linejoin="round"><path d="M1707 57.5 H1702.5 q-2.5 0 -2.5 2.5 V77 q0 2.5 2.5 2.5 H1722.5 q2.5 0 2.5 -2.5 V60 q0 -2.5 -2.5 -2.5 H1718"/><path d="M1712.5 68 V47.5 M1706.5 53 L1712.5 47 L1718.5 53"/></g>
<path d="M1791.7 53 V77 M1779.5 65 H1804" fill="none" stroke="#fff" stroke-width="2.3" stroke-linecap="round"/>
<g fill="none" stroke="#fff" stroke-width="2.3" stroke-linejoin="round"><path d="M1881.5 55.5 V53 q0 -3.2 -3.2 -3.2 H1861 q-3.2 0 -3.2 3.2 V69 q0 3.2 3.2 3.2 H1866"/><rect x="1866" y="57.5" width="22.5" height="22" rx="3.2"/></g>
<rect x="1761.7" y="17.8" width="4" height="6.0" rx="0.9" fill="#fff"/>
<rect x="1768.0" y="15.6" width="4" height="8.2" rx="0.9" fill="#fff"/>
<rect x="1774.4" y="13.4" width="4" height="10.4" rx="0.9" fill="#fff"/>
<rect x="1780.8" y="10.2" width="4" height="13.6" rx="0.9" fill="#6c6c70"/>
<g fill="none" stroke="#fff" stroke-width="2.3" stroke-linecap="butt"><path d="M1792 15 A13 13 0 0 1 1810 15"/><path d="M1795.2 18.2 A8.5 8.5 0 0 1 1806.8 18.2"/></g><path d="M1798.3 21.2 A4 4 0 0 1 1803.7 21.2 L1801 24 Z" fill="#fff"/>
<rect x="1862.5" y="9" width="32" height="15.5" rx="4" fill="none" stroke="#8e8e92" stroke-width="1.2"/><rect x="1865" y="11.5" width="18.5" height="10.5" rx="2" fill="#fff"/><path d="M1896.8 14.5 q1.5 0.5 1.5 2.2 q0 1.7 -1.5 2.2 z" fill="#8e8e92"/>
<rect x="205.5" y="117.5" width="22" height="21" rx="3.5" fill="none" stroke="#fff" stroke-width="1.3"/>
<circle cx="1373.7" cy="127.2" r="11.4" fill="#fff"/>
<g transform="translate(1373.7 127.6) scale(0.74) translate(-32.9 -637.9)"><path transform="translate(32.9 0) scale(0.9 1) translate(-32.9 0)" fill="#1f2024" d="M28.8 652.6 V646.5 C25.5 646 24 645.5 23.3 644 C22.8 643 21.6 642 21 642 L22 641.8 C23.2 642 24 643.5 25 644.3 C25.8 645 26.8 644.7 27.6 644.4 C25 643.5 22.8 641 22.8 637.5 C22.8 636 23.3 634.7 24.2 633.7 C23.9 632.5 24 631 24.4 629.6 C25.6 629.6 27 630.4 28.2 631.3 C29.4 631 31 630.8 32.9 630.8 C34.8 630.8 36.4 631 37.6 631.3 C38.8 630.4 40.2 629.6 41.4 629.6 C41.8 631 41.9 632.5 41.6 633.7 C42.5 634.7 43 636 43 637.5 C43 641 40.8 643.5 37.6 644.2 C37.2 645 37.3 646 37.3 647 V652.6 C36.7 653.4 34.8 653.7 32.9 653.7 C31 653.7 29.2 653.4 28.8 652.6 Z"/></g>
<path d="M19.6 123.8 L27.2 131.4 M27.2 123.8 L19.6 131.4" stroke="#2a2a2c" stroke-width="1.5"/>
</svg>
</body></html>
